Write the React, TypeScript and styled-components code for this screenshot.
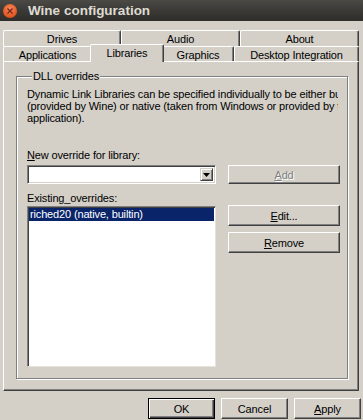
import styled, { createGlobalStyle } from 'styled-components';

const GlobalStyle = createGlobalStyle`
  html, body {
    margin: 0;
    padding: 0;
    background: #d4d0c8;
  }
  body {
    font-family: "Liberation Sans", Arial, sans-serif;
    font-size: 11px;
    letter-spacing: -0.15px;
    color: #000;
  }
`;

const Window = styled.div`
  width: 363px;
  height: 420px;
  overflow: hidden;
  background: #d4d0c8;
  display: flex;
  flex-direction: column;
`;

const TitleBar = styled.div`
  height: 21px;
  flex: none;
  display: flex;
  align-items: center;
  gap: 11px;
  padding-left: 3px;
  background: linear-gradient(#4b4a45, #3c3b37 45%, #2e2d2a);
  color: #dfdbd2;
  font-weight: bold;
  font-size: 13.5px;
  letter-spacing: 0;
`;

const CloseDot = styled.div`
  width: 14px;
  height: 14px;
  border-radius: 50%;
  background: radial-gradient(circle at 50% 35%, #f58a60, #e0541f 70%, #b8401a);
  display: flex;
  align-items: center;
  justify-content: center;
`;

const Body = styled.div`
  flex: 1;
  display: flex;
  flex-direction: column;
  padding: 9px 0 0 3px;
`;

const TabRow = styled.div<{ $h: number }>`
  display: flex;
  height: ${(p) => p.$h}px;
`;

const Tab = styled.div<{ $w: number; $active?: boolean }>`
  position: relative;
  box-sizing: border-box;
  width: ${(p) => p.$w + (p.$active ? 4 : 0)}px;
  height: ${(p) => (p.$active ? 18 : 16)}px;
  margin: ${(p) => (p.$active ? '-2px -2px 0' : '0')};
  z-index: ${(p) => (p.$active ? 2 : 0)};
  background: #d4d0c8;
  border-top: 1px solid #fff;
  border-left: 1px solid #fff;
  border-right: 1px solid #404040;
  box-shadow: inset -1px 0 #808080;
  border-radius: 2px 2px 0 0;
  display: flex;
  align-items: center;
  justify-content: center;
  padding-bottom: ${(p) => (p.$active ? 1 : 0)}px;
  white-space: nowrap;
`;

const Panel = styled.div`
  position: relative;
  z-index: 1;
  box-sizing: border-box;
  width: 356px;
  height: 330px;
  border: 1px solid;
  border-color: #fff #404040 #404040 #fff;
  box-shadow: inset -1px -1px #808080;
  padding: 8px 0 0 12px;
`;

const GroupBox = styled.fieldset`
  box-sizing: border-box;
  width: 332px;
  height: 309px;
  margin: 0;
  padding: 5px 7px 0 10px;
  border: 1px solid #808080;
  box-shadow: inset 1px 1px #fff, 1px 1px #fff;
  min-width: 0;
`;

const Legend = styled.legend`
  margin-left: 5px;
  padding: 0 1px;
  line-height: 13px;
  background: #d4d0c8;
`;

const Description = styled.div`
  width: 311px;
  overflow: hidden;
  white-space: nowrap;
  line-height: 12px;
`;

const FieldLabel = styled.div<{ $gap: number }>`
  margin-top: ${(p) => p.$gap}px;
  line-height: 12px;
`;

const Row = styled.div<{ $gap: number }>`
  display: flex;
  gap: 12px;
  align-items: flex-start;
  margin-top: ${(p) => p.$gap}px;
`;

const Combo = styled.div`
  box-sizing: border-box;
  width: 189px;
  height: 19px;
  background: #fff;
  border: 1px solid;
  border-color: #808080 #fff #fff #808080;
  box-shadow: inset 1px 1px #404040, inset -1px -1px #d4d0c8;
  display: flex;
  justify-content: flex-end;
  padding: 2px;
`;

const DropButton = styled.div`
  box-sizing: border-box;
  width: 13px;
  height: 100%;
  background: #d4d0c8;
  border: 1px solid;
  border-color: #d4d0c8 #404040 #404040 #d4d0c8;
  box-shadow: inset 1px 1px #fff, inset -1px -1px #808080;
  display: flex;
  align-items: center;
  justify-content: center;
`;

const Button = styled.button<{ $w: number; $h: number; $default?: boolean }>`
  box-sizing: border-box;
  width: ${(p) => p.$w}px;
  height: ${(p) => p.$h}px;
  padding: 0;
  font: inherit;
  letter-spacing: inherit;
  color: #000;
  background: #d4d0c8;
  border: 1px solid;
  border-color: ${(p) => (p.$default ? '#000' : '#fff #404040 #404040 #fff')};
  box-shadow: ${(p) =>
    p.$default
      ? 'inset 1px 1px #fff, inset -1px -1px #404040, inset -2px -2px #808080'
      : 'inset -1px -1px #808080'};
  &:disabled {
    color: #808080;
    text-shadow: 1px 1px #fff;
  }
`;

const ButtonColumn = styled.div`
  display: flex;
  flex-direction: column;
  gap: 6px;
  margin-top: -1px;
`;

const ListBox = styled.div`
  box-sizing: border-box;
  width: 189px;
  height: 161px;
  background: #fff;
  border: 1px solid;
  border-color: #808080 #e6e3dd #e6e3dd #808080;
  box-shadow: inset 1px 1px #404040;
  padding: 1px 1px 0 1px;
`;

const ListItem = styled.div<{ $selected?: boolean }>`
  height: 13px;
  line-height: 13px;
  padding-left: 1px;
  background: ${(p) => (p.$selected ? '#0a246a' : 'transparent')};
  color: ${(p) => (p.$selected ? '#fff' : '#000')};
  white-space: nowrap;
`;

const Footer = styled.div`
  display: flex;
  justify-content: flex-end;
  gap: 6px;
  margin-top: 7px;
  padding-right: 2px;
`;

const Key = styled.span`
  text-decoration: underline;
`;

const App = () => {
  return (
    <>
      <GlobalStyle />
      <Window>
        <TitleBar>
          <CloseDot>
            <svg width="6" height="6" viewBox="0 0 6 6">
              <path d="M0.5 0.5 L5.5 5.5 M5.5 0.5 L0.5 5.5" stroke="#7a2510" strokeWidth="1.3" />
            </svg>
          </CloseDot>
          Wine configuration
        </TitleBar>
        <Body>
          <TabRow $h={16}>
            <Tab $w={118}>Drives</Tab>
            <Tab $w={119}>Audio</Tab>
            <Tab $w={119}>About</Tab>
          </TabRow>
          <TabRow $h={15}>
            <Tab $w={89}>Applications</Tab>
            <Tab $w={70} $active>
              Libraries
            </Tab>
            <Tab $w={72}>Graphics</Tab>
            <Tab $w={125}>Desktop Integration</Tab>
          </TabRow>
          <Panel>
            <GroupBox>
              <Legend>DLL overrides</Legend>
              <Description>
                Dynamic Link Libraries can be specified individually to be either builtin
                <br />
                (provided by Wine) or native (taken from Windows or provided by the
                <br />
                application).
              </Description>
              <FieldLabel $gap={25}>
                <Key>N</Key>ew override for library:
              </FieldLabel>
              <Row $gap={4}>
                <Combo>
                  <DropButton>
                    <svg width="7" height="4" viewBox="0 0 7 4">
                      <path d="M0 0 H7 L3.5 4 Z" fill="#000" />
                    </svg>
                  </DropButton>
                </Combo>
                <Button $w={112} $h={19} disabled>
                  <Key>A</Key>dd
                </Button>
              </Row>
              <FieldLabel $gap={8}>Existing_overrides:</FieldLabel>
              <Row $gap={2}>
                <ListBox>
                  <ListItem $selected>riched20 (native, builtin)</ListItem>
                </ListBox>
                <ButtonColumn>
                  <Button $w={112} $h={21}>
                    <Key>E</Key>dit...
                  </Button>
                  <Button $w={112} $h={21}>
                    <Key>R</Key>emove
                  </Button>
                </ButtonColumn>
              </Row>
            </GroupBox>
          </Panel>
          <Footer>
            <Button $w={67} $h={21} $default>
              OK
            </Button>
            <Button $w={67} $h={21}>
              Cancel
            </Button>
            <Button $w={67} $h={21}>
              <Key>A</Key>pply
            </Button>
          </Footer>
        </Body>
      </Window>
    </>
  );
};

export default App;
